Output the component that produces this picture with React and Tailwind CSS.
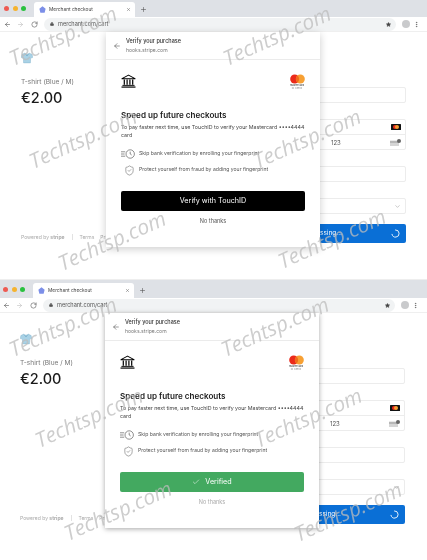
import React from "react";
import { ArrowLeft, ArrowRight, RotateCw, Lock, Star, EllipsisVertical, Plus, X, ChevronDown, ShieldCheck, Check } from "lucide-react";

const font = { fontFamily: "Inter, 'Liberation Sans', sans-serif" };

function Favicon() {
  return (
    <svg viewBox="0 0 10 10" className="w-[7px] h-[7px] shrink-0">
      <path d="M5 .5 9.5 4 8 9.5H2L.5 4z" fill="#7c8fe8" />
    </svg>
  );
}

function Shirt() {
  return (
    <svg viewBox="0 0 14 13" className="w-[12px] h-[12px]">
      <path d="M4.5 .8 1 2.5.4 6l2.4.6.2 5.6h8l.2-5.6 2.4-.6L13 2.5 9.5.8C8.8 2.4 5.2 2.4 4.5.8z" fill="#a9d2e6" stroke="#7fb2cc" strokeWidth=".5" />
      <path d="M5 1.5 7 4.2 9 1.5" fill="none" stroke="#5f9dbd" strokeWidth=".6" />
    </svg>
  );
}

function Bank() {
  return (
    <svg viewBox="0 0 16 15" className="w-[15px] h-[14px]" fill="none" stroke="#000">
      <path d="M1 5 8 1.2 15 5z" strokeWidth="1.1" strokeLinejoin="round" />
      <path d="M3.5 6v5.5M6.5 6v5.5M9.5 6v5.5M12.5 6v5.5" strokeWidth="1.3" />
      <path d="M1.5 12.2h13" strokeWidth="1" />
      <path d="M.5 14h15" strokeWidth="1.3" />
    </svg>
  );
}

function Mastercard() {
  return (
    <div className="flex flex-col items-center w-[16px] h-[18px]">
      <svg viewBox="0 0 16 10" className="w-[15px] h-[10px]">
        <circle cx="5" cy="5" r="4.8" fill="#eb2a1b" />
        <circle cx="11" cy="5" r="4.8" fill="#f7a033" />
        <path d="M8 1.3a4.8 4.8 0 0 1 0 7.4 4.8 4.8 0 0 1 0-7.4z" fill="#f26a1b" />
      </svg>
      <span className="text-[2.6px] leading-[3px] text-[#444] font-medium">mastercard</span>
      <span className="text-[2.4px] leading-[3px] text-[#888]">ID Check</span>
    </div>
  );
}

function ClockLines() {
  return (
    <svg viewBox="0 0 14 10" className="w-[14px] h-[10px]" fill="none" stroke="#444" strokeWidth=".6">
      <circle cx="9.2" cy="5" r="4.2" />
      <path d="M9.2 2.6V5l1.5 1" />
      <path d="M0 2.8h4.2M0 5h3.6M0 7.2h4.2" />
    </svg>
  );
}

function Spinner() {
  return (
    <svg viewBox="0 0 10 10" className="w-[9px] h-[9px]" fill="none" stroke="#fff" strokeWidth="1" strokeLinecap="round">
      <path d="M5 1a4 4 0 1 1-3.9 4.9" />
    </svg>
  );
}

function Field({ className = "", children }) {
  return <div className={`border border-[#ececec] rounded-[2px] ${className}`}>{children}</div>;
}

function Modal({ verified }) {
  return (
    <div className={`absolute left-[106px] top-[33px] w-[214px] h-[215px] bg-white ${verified ? "shadow-[0_1px_5px_rgba(0,0,0,0.35)]" : "shadow-[0_2px_8px_rgba(0,0,0,0.2)]"}`}>
      <div className="h-[28px] border-b border-[#ebebeb] flex items-center pl-[7px] gap-[5px]">
        <ArrowLeft className="w-[8px] h-[8px] text-[#444]" strokeWidth={1.6} />
        <div className="flex flex-col">
          <span className="text-[5.5px] leading-[9px] text-[#333] font-medium">Verify your purchase</span>
          <span className="text-[5.1px] leading-[8px] text-[#777]">hooks.stripe.com</span>
        </div>
      </div>
      <div className="px-[15px] pt-[14px] flex flex-col">
        <div className="flex justify-between h-[18px]">
          <Bank />
          <Mastercard />
        </div>
        <div className="mt-[17px] text-[8.1px] leading-[12px] font-semibold text-[#1a1a1a]">Speed up future checkouts</div>
        <div className="mt-[2px] text-[5.3px] leading-[8px] text-[#444] whitespace-nowrap">
          To pay faster next time, use TouchID to verify your Mastercard ••••4444
          <br />
          card
        </div>
        <div className="mt-[8px] flex flex-col gap-[2px]">
          <div className="h-[14px] flex items-center gap-[4px]">
            <div className="w-[14px] flex justify-end"><ClockLines /></div>
            <span className="text-[5.1px] text-[#555]">Skip bank verification by enrolling your fingerprint</span>
          </div>
          <div className="h-[14px] flex items-center gap-[4px]">
            <div className="w-[14px] flex justify-end"><ShieldCheck className="w-[11px] h-[11px] text-[#555]" strokeWidth={1.1} /></div>
            <span className="text-[5.1px] text-[#555]">Protect yourself from fraud by adding your fingerprint</span>
          </div>
        </div>
        {verified ? (
          <div className="mt-[14px] h-[20px] rounded-[2px] bg-[#43a960] flex items-center justify-center gap-[5px] text-white text-[7.2px]">
            <Check className="w-[8px] h-[8px]" strokeWidth={1.5} />
            <span>Verified</span>
          </div>
        ) : (
          <div className="mt-[14px] h-[20px] rounded-[2px] bg-black flex items-center justify-center text-white text-[7.2px]">
            Verify with TouchID
          </div>
        )}
        <div className={`mt-[6px] leading-[8px] text-center text-[5.5px] ${verified ? "text-[#aaa]" : "text-[#555]"}`}>No thanks</div>
      </div>
    </div>
  );
}

function Browser({ verified, className }) {
  return (
    <div className={`relative h-[281px] bg-white border-b border-[#eeeeee] overflow-hidden ${className}`}>
      <div className="h-[18px] bg-[#dee1e6] flex items-end">
        <div className="flex items-center gap-[3.5px] pl-[4px] h-[18px] w-[34px]">
          <span className="w-[5px] h-[5px] rounded-full bg-[#ee5a52]" />
          <span className="w-[5px] h-[5px] rounded-full bg-[#f5b32f]" />
          <span className="w-[5px] h-[5px] rounded-full bg-[#29c13f]" />
        </div>
        <div className="w-[101px] h-[15px] bg-white rounded-t-[3px] flex items-center pl-[5px] pr-[4px] gap-[3px]">
          <Favicon />
          <span className="text-[4.8px] text-[#444] flex-1">Merchant checkout</span>
          <X className="w-[5px] h-[5px] text-[#555]" strokeWidth={2} />
        </div>
        <Plus className="w-[7px] h-[7px] ml-[5px] mb-[4px] text-[#555]" strokeWidth={2} />
      </div>
      <div className="h-[15px] bg-white border-b border-[#efefef] flex items-center pl-[4px]">
        <ArrowLeft className="w-[7px] h-[7px] text-[#555]" strokeWidth={2} />
        <ArrowRight className="w-[7px] h-[7px] ml-[6px] text-[#bbb]" strokeWidth={2} />
        <RotateCw className="w-[7px] h-[7px] ml-[7px] text-[#555]" strokeWidth={2} />
        <div className="ml-[6px] w-[352px] h-[13px] rounded-full bg-[#f1f3f4] flex items-center pl-[6px] pr-[5px]">
          <Lock className="w-[4px] h-[4px] text-[#555]" fill="#555" strokeWidth={2} />
          <span className="ml-[4px] text-[5.6px] text-[#555] flex-1">merchant.com/cart</span>
          <Star className="w-[5px] h-[5px] text-[#444]" fill="#444" />
        </div>
        <span className="ml-[6px] w-[8px] h-[8px] rounded-full bg-[#c9cacc]" />
        <EllipsisVertical className="ml-[3px] w-[7px] h-[7px] text-[#555]" strokeWidth={2} />
      </div>
      <div className="flex h-[248px]">
        <div className="w-[228px] pl-[21px] pt-[20px] pb-[39px] flex flex-col">
          <Shirt />
          <div className="mt-[14px] text-[6.6px] leading-[9px] text-[#777]">T-shirt (Blue / M)</div>
          <div className="mt-[1px] text-[14.5px] leading-[19px] font-medium text-[#1a1a1a]">€2.00</div>
          <div className="mt-auto flex items-center text-[5px] text-[#aaa]">
            <span>Powered by <b className="font-bold">stripe</b></span>
            <span className="mx-[7px] w-px h-[6px] bg-[#e2e2e2]" />
            <span>Terms</span>
            <span className="ml-[6px]">Privacy</span>
          </div>
        </div>
        <div className="w-[178px] pt-[55px] flex flex-col">
          <Field className="h-[16px]" />
          <Field className="mt-[16px] h-[31px] flex flex-col">
            <div className="h-[15px] border-b border-[#ececec] flex items-center justify-end pr-[4px]">
              <svg viewBox="0 0 10 6" className="w-[10px] h-[6px]">
                <rect width="10" height="6" fill="#111" rx=".5" />
                <circle cx="4" cy="3" r="2" fill="#eb2a1b" />
                <circle cx="6" cy="3" r="2" fill="#f7a033" />
              </svg>
            </div>
            <div className="flex-1 grid grid-cols-2">
              <div className="border-r border-[#ececec]" />
              <div className="flex items-center justify-between pl-[14px] pr-[4px]">
                <span className="text-[6px] text-[#555]">123</span>
                <svg viewBox="0 0 11 7" className="w-[11px] h-[7px]">
                  <rect y="1.5" width="9" height="5.5" fill="#d5d5d5" />
                  <rect y="2.5" width="9" height="1" fill="#999" />
                  <circle cx="9" cy="2" r="2" fill="#666" />
                </svg>
              </div>
            </div>
          </Field>
          <Field className="mt-[16px] h-[16px]" />
          <Field className="mt-[16px] h-[16px] flex items-center justify-end pr-[4px]">
            <ChevronDown className="w-[7px] h-[7px] text-[#888]" strokeWidth={1.5} />
          </Field>
          <div className="relative mt-[10px] h-[19px] rounded-[2px] bg-[#0a6fd6] flex items-center justify-center text-white text-[6.5px] pl-[10px]">
            Processing...
            <span className="absolute right-[6px] top-[5px]"><Spinner /></span>
          </div>
        </div>
      </div>
      <Modal verified={verified} />
    </div>
  );
}

const marks = [
  "left-[63px] top-[36px]",
  "left-[277px] top-[36px]",
  "left-[83px] top-[139px]",
  "left-[307px] top-[139px]",
  "left-[112px] top-[241px]",
  "left-[332px] top-[239px]",
  "left-[63px] top-[327px]",
  "left-[275px] top-[327px]",
  "left-[89px] top-[418px]",
  "left-[308px] top-[418px]",
  "left-[118px] top-[511px]",
  "left-[348px] top-[512px]",
];

export default function App() {
  return (
    <div className="relative w-[427px] h-[560px] overflow-hidden bg-white blur-[0.35px]" style={font}>
      <Browser className="w-[427px] -mt-px" verified={false} />
      <Browser className="w-[428px] -ml-px" verified />
      {marks.map((m) => (
        <span
          key={m}
          className={`absolute ${m} -translate-x-1/2 -translate-y-1/2 rotate-[-24deg] text-[21px] italic whitespace-nowrap text-[#bcbcbc]/75 pointer-events-none`}
          style={{ fontFamily: "'Open Sans', sans-serif" }}
        >
          Techtsp.com
        </span>
      ))}
    </div>
  );
}
